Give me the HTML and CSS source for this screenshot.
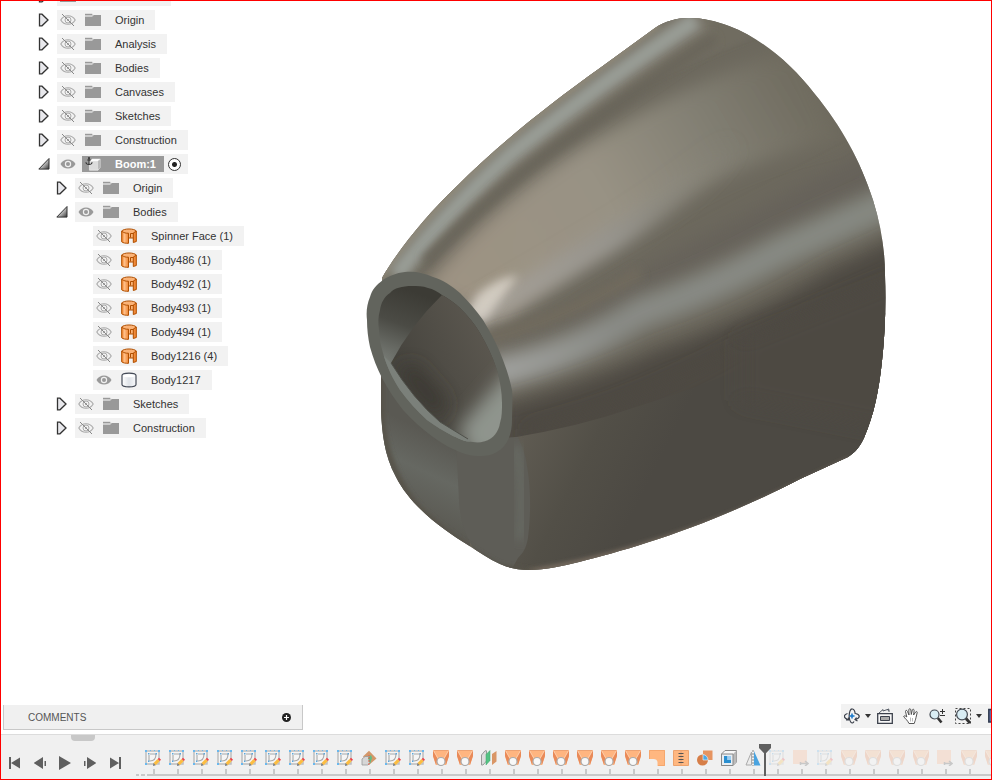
FILE: index.html
```html
<!DOCTYPE html>
<html lang="en">
<head>
  <meta charset="utf-8">
  <title>Boom</title>
  <link rel="stylesheet" href="styles.css">
</head>
<body>
  <!-- icon sprites -->
  <svg class="sprites" aria-hidden="true">
    <defs>
      <linearGradient id="gArrow" x1="0" y1="0" x2="1" y2="1">
        <stop offset=".3" stop-color="#fff"/><stop offset="1" stop-color="#333"/>
      </linearGradient>
      <linearGradient id="gBody" x1="0" x2="1" y1="0" y2="0">
        <stop offset="0" stop-color="#fff"/><stop offset=".5" stop-color="#dfe3e8"/><stop offset="1" stop-color="#f8f9fb"/>
      </linearGradient>
      <linearGradient id="gOrange" x1="0" x2="1" y1="0" y2="0">
        <stop offset="0" stop-color="#f07f22"/><stop offset=".4" stop-color="#ffc08a"/><stop offset="1" stop-color="#ef8430"/>
      </linearGradient>
    </defs>
    <symbol id="closed" viewBox="0 0 12 14">
      <path d="M1.500 1.200H4L10 7 4 12.800H1.500z" fill="#e8e8ec" stroke="#333" stroke-width="1.300"/>
    </symbol>
    <symbol id="open" viewBox="0 0 12 14">
      <path d="M11 1.500v10.600H.8z" fill="url(#gArrow)" stroke="#333"/>
    </symbol>
    <symbol id="eye" viewBox="0 0 16 16">
      <path d="M.5 8C3.500 2 12.500 2 15.500 8 12.500 14 3.500 14 .5 8z" fill="#999"/>
      <circle cx="8" cy="8" r="3.200" fill="#f0f0f0"/><circle cx="8" cy="8" r="2" fill="#999"/>
    </symbol>
    <symbol id="eyeoff" viewBox="0 0 16 16" fill="none" stroke="#aaa">
      <path d="M.8 8C4 2.300 12 2.300 15.200 8 12 13.700 4 13.700 .8 8z" stroke-width="1.100"/>
      <circle cx="8" cy="8" r="3"/><circle cx="8" cy="8" r="1" fill="#999" stroke="none"/>
      <path d="M2 2l12 12" stroke="#888"/>
    </symbol>
    <symbol id="folder" viewBox="0 0 16 16">
      <path d="M0 1.500h7l1.500 1.500H16V14H0z" fill="#ccc"/>
      <path d="M0 2h7v1H0zM0 5h7l2-2h7v11H0z" fill="#999"/>
    </symbol>
    <symbol id="surface" viewBox="0 0 16 16">
      <path d="M.7 3C3 .3 13 .3 15.300 3v10.500l-3 1V10H7.500v5.300C4.500 15.300 2 15 .7 13.800z" fill="#fbb377"/>
      <path d="M.7 3.200c2 1.600 4.300 2.200 6.800 2v10C4.500 15.300 2 15 .7 13.800z" fill="url(#gOrange)"/>
      <path d="M12.300 5l3-1.800v10.300l-3 1z" fill="#f08a3a"/>
      <path d="M.7 3C3 .3 13 .3 15.300 3v10.500l-3 1V10H7.500v5.300C4.500 15.300 2 15 .7 13.800zM.7 3.200c2 1.600 4.300 2.200 6.800 2V10M12.300 10V5l3-1.800M9.500 9.500V5.500h2.800" fill="none" stroke="#b04f00"/>
    </symbol>
    <symbol id="solid" viewBox="0 0 16 16">
      <path d="M1 3.500C1 .2 15 .2 15 3.500v9c0 3.200-14 3.200-14 0z" fill="url(#gBody)" stroke="#454b57" stroke-width="1.200"/>
      <path d="M2 4c1 1.800 11 1.800 12 0C13 1.500 3 1.500 2 4z" fill="#fff"/>
    </symbol>
    <symbol id="anchored" viewBox="0 0 18 16">
      <path d="M5 5l3-2.500h9L14.500 5z" fill="#fff"/><path d="M5 5h9.500v10H5z" fill="#dcdcdc"/>
      <path d="M14.500 5L17 2.500v9.500L14.500 15z" fill="#a8a8a8"/>
      <path d="M5 5h9.500v10H5zM14.500 5L17 2.500v9.500L14.500 15M8 2.500h9" fill="none" stroke="#f4f4f4" stroke-width=".7"/>
      <path d="M4.500 1.500v7.500M2.500 3.500h4M1 6c.5 3.500 6.500 3.500 7 0" fill="none" stroke="#333" stroke-width="1.200"/>
      <circle cx="4.500" cy="1.200" r="1.100" fill="#333"/>
    </symbol>
    <symbol id="sketch" viewBox="0 0 16 16">
      <path d="M1 1h13v13H1z" fill="#f5f5f5" stroke="#bdbdbd" stroke-width="1.500"/>
      <path d="M4 5v6M5 4h6M5 11c4 0 6-3 6-7" fill="none" stroke="#a8a8a8" stroke-width="1.100"/>
      <path d="M0 0h2v2H0zM13 0h2v2h-2zM0 13h2v2H0zM5 0h1v1H5zM9 0h1v1H9z" fill="#69b8ee"/>
      <path d="M3 3h1.500v1.500H3zM10.500 3H12v1.500h-1.500zM3 10.500h1.500V12H3z" fill="#5aa5da"/>
      <path d="M8.500 13l4-4 2.200 2.200-4 4z" fill="#fcbd42"/>
      <path d="M12.700 9l1.300-1.200 2 2-1.200 1.300z" fill="#ef4045"/>
      <path d="M8.500 13L8 16l2.700-.8z" fill="#777"/>
    </symbol>
    <symbol id="plane" viewBox="0 0 16 16">
      <path d="M8 .8L15.500 8.500 9 14 2 6.500z" fill="#d39769"/>
      <path d="M1 9l3-2.500h5V13l-2 2H1z" fill="#d6d6d6" stroke="#999" stroke-width=".8"/>
      <path d="M7 8l3-3 1 3-2 6z" fill="#61bd86"/><path d="M8 15V5" stroke="#e55b43" stroke-dasharray="2 1"/>
    </symbol>
    <symbol id="loft" viewBox="0 0 16 16">
      <path d="M0 0h16v6l-3 9H3L0 6z" fill="#ffb580"/>
      <path d="M0 0l4.500 8.500L3 15 0 6zM16 0l-4.500 8.500L13 15l3-9z" fill="#e98a58"/>
      <path d="M.5.500h15" stroke="#eda273" fill="none"/>
      <path d="M.5.500L5 8.500M15.500.500L11 8.500" stroke="#fbd3b5" fill="none" stroke-width=".8"/>
      <circle cx="8" cy="11.500" r="4" fill="#f8f8f8" stroke="#aaa" stroke-width="1.200"/>
    </symbol>
    <symbol id="offset" viewBox="0 0 16 16">
      <path d="M.5 5L4 .8h1.500V11L2 15H.5z" fill="#ddd" stroke="#999"/>
      <path d="M5 4.500L9 .5v10L5 15z" fill="#54c283" stroke="#43a56d" stroke-width=".5"/>
      <path d="M11 4l4.500-3v10.500L11 15z" fill="#d99666"/>
    </symbol>
    <symbol id="patch" viewBox="0 0 16 16">
      <path d="M0 0h16v16H8.500v-4q-.5-3-4-3H0z" fill="#ffb780"/>
      <path d="M.5 9V.5h15v15H9" fill="none" stroke="#f5a76e"/>
    </symbol>
    <symbol id="stitch" viewBox="0 0 16 16">
      <path d="M.5.500h15v15H.5z" fill="#ffb780" stroke="#eda36e"/>
      <path d="M8 1v14" stroke="#e5a276"/>
      <path d="M5.500 3.500h5M5.500 6.500h5M5.500 9.500h5M5.500 12.500h5" stroke="#555"/>
    </symbol>
    <symbol id="combine" viewBox="0 0 16 16">
      <path d="M6 .5h9.500V10H6z" fill="#e69460"/><circle cx="5.500" cy="10" r="5.500" fill="#d67e48"/>
      <path d="M6 4.500A5.500 5.500 0 0 1 11 10H6z" fill="#4aa8e8" stroke="#eee" stroke-width=".7"/>
    </symbol>
    <symbol id="shell" viewBox="0 0 16 16">
      <path d="M.5 4L4 .5h11.500V12L12 15.500H.5z" fill="#f8f8f8" stroke="#888"/>
      <path d="M12 4l3.500-3.500V12L12 15.500z" fill="#bbb"/>
      <path d="M.5 4H12v11.500H.5z" fill="#e8eef3" stroke="#888"/>
      <path d="M3 6h3.500v4H10v3H3z" fill="#2a8fd0"/><path d="M6.500 6H10v4H6.500z" fill="#9ccdf0"/>
    </symbol>
    <symbol id="mirror" viewBox="0 0 16 16">
      <path d="M6.500 2v13H1z" fill="#ececec" stroke="#aaa"/><path d="M9 1l6.500 14.500H9z" fill="#4aa3df"/>
      <path d="M8 0v16" stroke="#888" stroke-dasharray="2 1"/>
    </symbol>
    <symbol id="box" viewBox="0 0 16 16">
      <path d="M0 0h14v14H0z" fill="#ffb387"/><path d="M7 13.500h8M12 11l3 2.500-3 2.500M7.500 12v3" stroke="#555" stroke-width="1.500" fill="none"/>
    </symbol>
    <symbol id="caret" viewBox="0 0 6 4"><path d="M0 0h6L3 4z" fill="#333"/></symbol>
    <symbol id="orbit" viewBox="0 0 16 16" fill="none" stroke="#3c414c" stroke-width="1.200">
      <path d="M4 11.500C-1 10-.5 6.500 3.500 5.500M11.500 5.500c5 1 5 4.500 0 6M10 13.500c-2 3.500-4.500.5-4.800-4.500S6.500.5 8.500 1c1.800.4 2.500 2.500 2.700 5M4.500 9.500v2.500H2M12.500 9.500l-1.500 2 2.500 1.500"/>
      <path d="M8 5.500v5M5.500 8h5" stroke="#1675c9" stroke-width="1.500"/>
    </symbol>
    <symbol id="lookat" viewBox="0 0 16 16">
      <path d="M.7 5.700h14.600v9.600H.7z" fill="#f7f7f7" stroke="#3c414c" stroke-width="1.300"/>
      <path d="M3.500 8.500h9v4h-9z" fill="#aaa" stroke="#3c414c"/>
      <path d="M2 5l4-3.500V3l6-2-1 2h2" fill="none" stroke="#555b65"/>
    </symbol>
    <symbol id="hand" viewBox="0 0 16 16">
      <path d="M6 15.500C4.500 12.500 2.500 10.500.8 9c-.3-1.600 1.500-1.500 3 0L2.500 3.500c0-1.500 1.500-1.500 2 0L6 7 5.800 1.800c.2-1.500 1.800-1.400 2 0L8.300 6.500l1-4.500c.5-1.300 2-.8 1.800.6L10.600 7l2-3c1-1 2-.2 1.500 1L13 9.500c-.5 2.500-1 3.500-1.800 6z" fill="#fff" stroke="#444" stroke-width=".9"/>
      <path d="M7.500 9.500v4M9.500 10v3.500" stroke="#bbb"/>
    </symbol>
    <symbol id="zoom" viewBox="0 0 16 16">
      <circle cx="5.500" cy="6.500" r="4.500" fill="#d9edf4" stroke="#434952" stroke-width="1.200"/>
      <path d="M8.800 10l3.700 4.500" stroke="#333" stroke-width="2.600"/>
      <path d="M13.500 1v5M11 3.500h5M11 7.500h5" stroke="#333"/>
    </symbol>
    <symbol id="zoomwin" viewBox="0 0 16 16">
      <path d="M.5.500h15v15H.5z" fill="none" stroke="#444" stroke-dasharray="2 2"/>
      <circle cx="7" cy="6.500" r="5.400" fill="#d9edf4" stroke="#434952" stroke-width="1.200"/>
      <path d="M11 10.500l4 4.500" stroke="#333" stroke-width="2.800"/>
    </symbol>
    <symbol id="display" viewBox="0 0 16 16">
      <path d="M.8 1.500h14.500v12.500H.8z" fill="#5f6da0" stroke="#333c50" stroke-width="1.500"/>
    </symbol>
    <symbol id="first" viewBox="0 0 12 12"><path d="M0 0h2v12H0zM11 .5v11L2 6z"/></symbol>
    <symbol id="prev" viewBox="0 0 12 12"><path d="M9 0v12L-.5 6zM10.500 4h1.500v5h-1.500z"/></symbol>
    <symbol id="play" viewBox="0 0 12 14"><path d="M0 0v14l12-7z"/></symbol>
    <symbol id="next" viewBox="0 0 12 12"><path d="M3 0v12l9.500-6zM0 4h1.500v5H0z"/></symbol>
    <symbol id="last" viewBox="0 0 12 12"><path d="M10 0h2v12h-2zM1 .5v11L10 6z"/></symbol>
  </svg>

  <main class="stage">
    <ul class="tree" id="tree"></ul>

    <svg class="model" viewBox="350 1 560 590" role="img" aria-label="Boom body">
      <defs>
        <clipPath id="hull">
          <path d="M655 28C665 21 677 18 689 18C703 18 716 21 729 26C763 39 791 64 814 93C842 127 860 160 873 200C881 226 885 250 885 275C886 305 885 335 882 361C879 390 874 415 864 438C860 446 856 452 848 457L800 479C705 528 630 549 579 562C562 566 546 570 529 570C518 570 509 568 500 564C489 559 479 552 468 545C445 531 411 507 396 477C384 455 382 432 381 410V376L382 278C397 252 425 216 457 186C495 148 545 107 600 68z"/>
        </clipPath>
        <clipPath id="bore">
          <path d="M412 286C402 286 394 288 390 293C384 297 381 303 380 310C378 317 378 323 379 330C379 338 381 346 383 353C387 367 393 379 400 390C408 401 417 411 427 420C435 426 444 431 453 436C460 439 466 442 473 442C479 443 485 442 490 439C495 436 499 430 500 423C502 417 502 410 502 403C502 392 500 381 497 370C493 357 487 345 480 333C475 324 468 316 460 308C455 303 449 299 442 295C438 292 433 289 428 288C423 286 417 286 412 286z"/>
        </clipPath>
        <filter id="b2" x="-20%" y="-20%" width="140%" height="140%"><feGaussianBlur stdDeviation="2"/></filter>
        <filter id="b5" x="-30%" y="-30%" width="160%" height="160%"><feGaussianBlur stdDeviation="5"/></filter>
        <filter id="b9" x="-50%" y="-50%" width="200%" height="200%"><feGaussianBlur stdDeviation="9"/></filter>
        <linearGradient id="gBeige" gradientUnits="userSpaceOnUse" x1="450" y1="280" x2="790" y2="80">
          <stop offset="0" stop-color="#9d9383"/><stop offset=".45" stop-color="#989284"/><stop offset=".75" stop-color="#827f73"/><stop offset="1" stop-color="#716d61"/>
        </linearGradient>
        <linearGradient id="gStreak" gradientUnits="userSpaceOnUse" x1="475" y1="318" x2="740" y2="140">
          <stop offset="0" stop-color="#a8a39b"/><stop offset=".5" stop-color="#999791"/><stop offset="1" stop-color="#7e7c71" stop-opacity="0"/>
        </linearGradient>
        <linearGradient id="gSheen" gradientUnits="userSpaceOnUse" x1="500" y1="370" x2="885" y2="200">
          <stop offset="0" stop-color="#a1a29f"/><stop offset=".3" stop-color="#898b86"/><stop offset="1" stop-color="#868982"/>
        </linearGradient>
        <linearGradient id="gLow" gradientUnits="userSpaceOnUse" x1="520" y1="440" x2="640" y2="500">
          <stop offset="0" stop-color="#5f5b52"/><stop offset=".5" stop-color="#524f47"/><stop offset="1" stop-color="#4c4943"/>
        </linearGradient>
        <linearGradient id="gChin" gradientUnits="userSpaceOnUse" x1="435" y1="435" x2="395" y2="520">
          <stop offset="0" stop-color="#5a5953"/><stop offset=".4" stop-color="#666862"/><stop offset="1" stop-color="#58564f"/>
        </linearGradient>
        <linearGradient id="gBoreL" gradientUnits="userSpaceOnUse" x1="415" y1="292" x2="388" y2="365">
          <stop offset="0" stop-color="#3c3b35"/><stop offset=".45" stop-color="#4b4b45"/><stop offset="1" stop-color="#7b7f79"/>
        </linearGradient>
        <linearGradient id="gBoreR" gradientUnits="userSpaceOnUse" x1="400" y1="370" x2="490" y2="330">
          <stop offset="0" stop-color="#46443e"/><stop offset="1" stop-color="#5c5850"/>
        </linearGradient>
      </defs>
      <g clip-path="url(#hull)">
        <path d="M350 0h560v590H350z" fill="#6c685d"/>
        <!-- warm upper face -->
        <path d="M420 290Q500 190 618 125Q690 82 800 45L840 140Q740 160 665 208Q580 262 500 320z" fill="url(#gBeige)" filter="url(#b9)"/>
        <path d="M470 322Q535 285 600 246Q670 205 740 140" fill="none" stroke="url(#gStreak)" stroke-width="22" filter="url(#b9)"/>
        <path d="M464 316L478 294Q500 276 518 276Q500 300 484 322z" fill="#e2dcd2" filter="url(#b5)" opacity=".75"/>
        <!-- ridge along the top left -->
        <path d="M370 290Q435 200 528 120L655 24L700 5L765 32L640 87Q520 155 425 270z" fill="#706c60" filter="url(#b2)"/>
        <path d="M370 290Q435 200 528 120L655 24L700 5L710 30Q540 140 400 280z" fill="#7a766a" filter="url(#b5)"/>
        <path d="M376 282Q435 200 528 122L658 24" fill="none" stroke="#8b8475" stroke-width="8" filter="url(#b2)"/>
        <path d="M396 276Q445 213 511 154Q600 83 696 20" fill="none" stroke="#999d96" stroke-width="17" filter="url(#b5)"/>
        <path d="M425 262Q500 184 579 131Q640 88 715 38" fill="none" stroke="#69655a" stroke-width="10" filter="url(#b5)"/>
        <!-- dark valley and lower sheen -->
        <path d="M490 340Q570 318 636 272Q740 218 850 160L910 130V180L840 205Q740 250 640 296Q570 330 495 348z" fill="#66625a" filter="url(#b9)"/>
        <path d="M490 338Q570 316 640 272" fill="none" stroke="#716b5d" stroke-width="11" filter="url(#b5)"/>
        <path d="M490 374Q570 358 640 313Q710 290 779 252L900 198" fill="none" stroke="url(#gSheen)" stroke-width="31" filter="url(#b9)"/>
        <path d="M500 405Q580 385 655 350Q750 318 830 268L920 226V490L500 480z" fill="#4e4a42" filter="url(#b9)"/>
        <path d="M530 430Q650 400 740 345L930 270V520L530 480z" fill="#4e4a42" filter="url(#b9)"/>
        <!-- lower hull under the crease -->
        <path d="M505 439Q575 428 636 407Q705 386 768 357L920 300V600H505z" fill="url(#gLow)"/>
        <path d="M740 340L940 260V440L740 400z" fill="#4e4a43" filter="url(#b9)"/>
        <path d="M850 460L746 509Q640 553 529 572" fill="none" stroke="#796d60" stroke-width="5" filter="url(#b2)"/>
        <!-- chin -->
        <path d="M370 370L470 440V570L350 540z" fill="url(#gChin)"/>
        <path d="M456 440L518 437C523 448 526 457 527 466C531 488 531 514 528 538C526 548 524 552 518 558L500 590L476 552Q460 530 459 500z" fill="#5e5d57"/>
        <path d="M516 446Q525 490 520 540" fill="none" stroke="#676a63" stroke-width="9" filter="url(#b5)"/>
        <path d="M381 376V410Q384 470 421 511Q465 550 500 567L540 574" fill="none" stroke="#57524a" stroke-width="6" filter="url(#b2)"/>
      </g>
      <!-- front lip -->
      <path d="M405 272C396 273 389 276 383 280C376 285 372 290 370 297C367 304 366 312 367 320C367 329 368 338 370 347C373 358 377 368 382 378C388 389 395 400 403 410C412 420 422 429 433 437C439 441 446 446 453 449C461 453 469 456 477 456C483 456 488 456 493 454C500 451 504 447 507 442C511 435 512 427 512 420C512 410 513 400 512 390C510 380 507 370 503 360C498 346 491 333 483 320C476 310 468 301 460 293C452 286 443 280 433 277C424 273 415 271 405 272z" fill="#62645d"/>
      <g clip-path="url(#bore)">
        <path d="M370 280h140v170H370z" fill="url(#gBoreL)"/>
        <path d="M442 295Q411 325 391 363Q413 402 440 422L468 442L510 450V300z" fill="url(#gBoreR)"/>
        <path d="M398 368Q415 398 440 420L446 400L415 365z" fill="#3b3933" filter="url(#b9)"/>
        <path d="M520 360Q488 392 458 430L474 460L530 450z" fill="#8f948d" filter="url(#b9)"/>
        <path d="M376 348L391 363Q413 399 440 422L470 440L468 454Q400 430 376 348z" fill="#7b807a"/>
      </g>
      <path d="M391 363Q413 399 440 422L468 439" fill="none" stroke="#4f504a"/>
    </svg>

    <div class="bars">
      <section class="comments">
        <span>COMMENTS</span>
        <button aria-label="Add comment">
          <svg width="9" height="9" viewBox="0 0 9 9"><circle cx="4.500" cy="4.500" r="4.500" fill="#222"/><path d="M4.500 2v5M2 4.500h5" stroke="#fff" stroke-width="1.200"/></svg>
        </button>
      </section>
      <nav class="navbar">
        <button class="split" aria-label="Orbit"><svg class="icon"><use href="#orbit"/></svg><svg class="caret"><use href="#caret"/></svg></button>
        <button aria-label="Look at"><svg class="icon"><use href="#lookat"/></svg></button>
        <button aria-label="Pan"><svg class="icon"><use href="#hand"/></svg></button>
        <button aria-label="Zoom"><svg class="icon"><use href="#zoom"/></svg></button>
        <button class="split" aria-label="Zoom window"><svg class="icon"><use href="#zoomwin"/></svg><svg class="caret"><use href="#caret"/></svg></button>
        <button aria-label="Display settings"><svg class="icon"><use href="#display"/></svg></button>
      </nav>
    </div>
  </main>

  <footer class="history">
    <div class="playback">
      <button aria-label="First"><svg><use href="#first"/></svg></button>
      <button aria-label="Previous"><svg><use href="#prev"/></svg></button>
      <button aria-label="Play"><svg class="big"><use href="#play"/></svg></button>
      <button aria-label="Next"><svg><use href="#next"/></svg></button>
      <button aria-label="Last"><svg><use href="#last"/></svg></button>
    </div>
    <ol class="timeline" id="timeline"></ol>
  </footer>

  <script>
    // [level, state, visible, icon, name]
    const nodes = [
      [0, 'closed', null, 'folder', ''],
      [0, 'closed', false, 'folder', 'Origin'],
      [0, 'closed', false, 'folder', 'Analysis'],
      [0, 'closed', false, 'folder', 'Bodies'],
      [0, 'closed', false, 'folder', 'Canvases'],
      [0, 'closed', false, 'folder', 'Sketches'],
      [0, 'closed', false, 'folder', 'Construction'],
      [0, 'open', true, 'anchored', 'Boom:1'],
      [1, 'closed', false, 'folder', 'Origin'],
      [1, 'open', true, 'folder', 'Bodies'],
      [2, '', false, 'surface', 'Spinner Face (1)'],
      [2, '', false, 'surface', 'Body486 (1)'],
      [2, '', false, 'surface', 'Body492 (1)'],
      [2, '', false, 'surface', 'Body493 (1)'],
      [2, '', false, 'surface', 'Body494 (1)'],
      [2, '', false, 'surface', 'Body1216 (4)'],
      [2, '', true, 'solid', 'Body1217'],
      [1, 'closed', false, 'folder', 'Sketches'],
      [1, 'closed', false, 'folder', 'Construction']
    ];

    function icon(name, cls) {
      return `<svg class="${cls}"><use href="#${name}"/></svg>`;
    }

    document.getElementById('tree').innerHTML = nodes.map(([level, state, visible, type, name]) => {
      const active = type === 'anchored';
      const arrow = state
        ? `<button class="arrow" aria-label="Toggle">${icon(state, 'arrow-icon')}</button>`
        : '<span class="arrow"></span>';
      const eye = visible === null ? ''
        : `<button class="eye" aria-label="Visibility">${icon(visible ? 'eye' : 'eyeoff', 'icon')}</button>`;
      const radio = active ? '<input type="radio" name="active" aria-label="Activate" checked>' : '';
      return `<li class="row level-${level}">${arrow}<div class="chip${name ? '' : ' chip-plain'}${active ? ' chip-active' : ''}">${eye}
        <span class="label">${icon(type, 'icon')}<span>${name}</span></span>${radio}</div></li>`;
    }).join('');

    const done = [
      ...Array(9).fill('sketch'), 'plane', 'sketch', 'sketch', 'loft', 'loft', 'offset',
      ...Array(6).fill('loft'), 'patch', 'stitch', 'combine', 'shell', 'mirror'
    ];
    const rolledBack = ['sketch', 'box', 'sketch', 'loft', 'loft', 'loft', 'loft', 'box', 'loft', 'loft'];

    document.getElementById('timeline').innerHTML =
      done.map(f => `<li>${icon(f, 'icon')}</li>`).join('') +
      rolledBack.map((f, i) => `<li class="faded">${icon(f, 'icon')}${i ? '' : '<span class="marker"></span>'}</li>`).join('');
  </script>
</body>
</html>
```
FILE: styles.css
```css
* {
  box-sizing: border-box;
}

body {
  margin: 0;
  height: 100vh;
  display: flex;
  flex-direction: column;
  border: 1px solid #f00;
  overflow: hidden;
  background: #fff;
  font-family: "Liberation Sans", Arial, sans-serif;
  font-size: 11px;
  color: #333;
}

button {
  display: flex;
  align-items: center;
  padding: 0;
  border: 0;
  background: none;
  cursor: pointer;
}

ul, ol {
  margin: 0;
  padding: 0;
  list-style: none;
}

svg {
  display: block;
  flex: none;
}

.sprites {
  position: absolute;
  width: 0;
  height: 0;
}

.icon {
  width: 16px;
  height: 16px;
}

.stage {
  flex: 1;
  min-height: 0;
  display: grid;
  grid-template-columns: 349px 1fr;
  grid-template-rows: 1fr auto;
  overflow: hidden;
}

/* browser tree, scrolled a little */
.tree {
  margin-top: -17px;
}

.row {
  display: flex;
  align-items: center;
  height: 24px;
  padding-left: 37px;
}

.level-1 {
  padding-left: 55px;
}

.level-2 {
  padding-left: 73px;
}

.arrow {
  width: 19px;
}

.arrow-icon {
  width: 12px;
  height: 14px;
}

.chip {
  display: flex;
  align-items: center;
  height: 20px;
  padding: 0 11px 0 3px;
  background: #f2f2f2;
}

.chip-plain {
  width: 114px;
}

.label {
  display: flex;
  align-items: center;
  gap: 14px;
  white-space: nowrap;
}

.eye + .label {
  margin-left: 9px;
}

.chip-active {
  padding-right: 7px;
}

.chip-active .label {
  height: 16px;
  padding: 0 8px 0 3px;
  background: #999;
  color: #fff;
  font-weight: bold;
}

.chip-active .eye + .label {
  margin-left: 6px;
}

.chip input {
  appearance: none;
  width: 13px;
  height: 13px;
  margin: 0 0 0 4px;
  border: 1px solid #333;
  border-radius: 50%;
  background: radial-gradient(circle, #222 0 2px, #fff 3px);
}

.model {
  width: 560px;
  height: 590px;
}

.bars {
  grid-column: 1 / -1;
  display: flex;
  justify-content: space-between;
  align-items: flex-end;
  padding: 0 0 4px 2px;
}

.comments {
  display: flex;
  justify-content: space-between;
  align-items: center;
  width: 300px;
  height: 25px;
  padding: 0 11px 0 24px;
  background: #f0f0f0;
  border: 1px solid #c8c8c8;
  border-top: 0;
  font-size: 10px;
  color: #555;
}

.navbar {
  display: flex;
  align-items: center;
  gap: 10px;
  width: 150px;
  height: 24px;
  margin-bottom: 2px;
  padding-left: 3px;
  overflow: hidden;
  background: #f2f2f2;
}

.split {
  gap: 5px;
  margin-right: -4px;
}

.caret {
  width: 6px;
  height: 4px;
}

.history {
  position: relative;
  display: flex;
  height: 45px;
  background: #f0f0f0;
  border-top: 1px solid #dcdcdc;
}

/* drag handle */
.history::before {
  content: "";
  position: absolute;
  left: 70px;
  top: 0;
  width: 24px;
  height: 6px;
  border-radius: 0 0 4px 4px;
  background: #c8c8c8;
}

.playback {
  display: flex;
  width: 135px;
  padding: 16px 0 0 1px;
  fill: #5f5f5f;
}

.playback button {
  justify-content: center;
  width: 25px;
  height: 24px;
}

.playback svg {
  width: 12px;
  height: 12px;
}

.playback .big {
  height: 14px;
}

.timeline {
  flex: 1;
  min-width: 0;
  display: flex;
  padding-left: 5px;
  overflow: hidden;
  background:
    linear-gradient(#c8c8c8, #c8c8c8) 11px 39px / 100% 2px no-repeat,
    linear-gradient(90deg, #c8c8c8 3px, transparent 3px 5px, #c8c8c8 5px) 0 39px / 9px 2px no-repeat;
}

.timeline li {
  position: relative;
  flex: none;
  width: 24px;
  padding: 15px 4px 0;
  background: linear-gradient(#c8c8c8, #c8c8c8) 12px 34px / 2px 5px no-repeat;
}

.faded .icon {
  opacity: .25;
}

.marker {
  position: absolute;
  left: -1px;
  top: 9px;
  width: 2px;
  height: 32px;
  background: #5f5f5f;
}

.marker::before {
  content: "";
  position: absolute;
  left: -5px;
  top: 0;
  width: 12px;
  height: 9px;
  background: #5f5f5f;
  clip-path: polygon(0 0, 100% 0, 100% 45%, 60% 100%, 40% 100%, 0 45%);
}
```
